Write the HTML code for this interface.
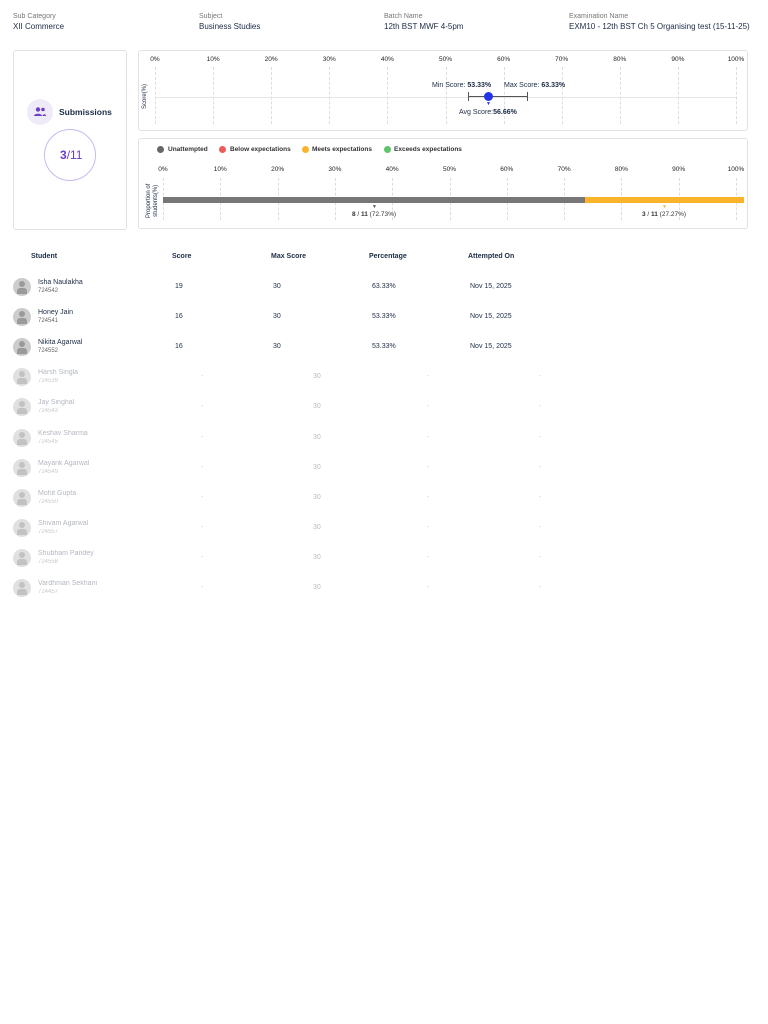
<!DOCTYPE html><html><head><style>
*{margin:0;padding:0;box-sizing:border-box}
body{width:768px;height:1024px;background:#fff;font-family:"Liberation Sans",sans-serif;position:relative;overflow:hidden;color:#1c2b45}
.a{position:absolute;white-space:nowrap}
.lbl{font-size:7px;color:#777}
.val{font-size:8px;color:#1c2b45}
.card{position:absolute;border:1px solid #e2e2e2;border-radius:3px}
.t{font-size:6.5px;color:#222;transform:translateX(-50%)}
.vl{position:absolute;border-left:1px dashed #ddd;width:0}
.h{font-size:7px;font-weight:bold;color:#1c2b45}
.c{font-size:7px;transform:translateX(-50%)}
.av{position:absolute;width:18px;height:18px;border-radius:50%;background:#ccc;overflow:hidden}
.av:before{content:"";position:absolute;left:6px;top:3px;width:6px;height:6px;border-radius:50%;background:#9a9a9a}
.av:after{content:"";position:absolute;left:4px;top:10px;width:10px;height:6px;border-radius:3px 3px 0 0;background:#9a9a9a}
</style></head><body>
<div class="a lbl" style="left:13px;top:13px">Sub Category</div><div class="a val" style="left:13px;top:22px">XII Commerce</div>
<div class="a lbl" style="left:199px;top:13px">Subject</div><div class="a val" style="left:199px;top:22px">Business Studies</div>
<div class="a lbl" style="left:384px;top:13px">Batch Name</div><div class="a val" style="left:384px;top:22px">12th BST MWF 4-5pm</div>
<div class="a lbl" style="left:569px;top:13px">Examination Name</div><div class="a val" style="left:569px;top:22px">EXM10 - 12th BST Ch 5 Organising test (15-11-25)</div>

<div class="card" style="left:13px;top:50px;width:114px;height:180px"></div>
<div class="a" style="left:27px;top:99px;width:26px;height:26px;border-radius:50%;background:#efeaf8"></div>
<svg class="a" style="left:33px;top:106px" width="14" height="12" viewBox="0 0 14 12"><circle cx="5" cy="3.5" r="2.2" fill="#6b3fc9"/><circle cx="10" cy="3.5" r="1.8" fill="#6b3fc9"/><path d="M1 10c0-3 8-3 8 0z M9.5 10c0-2 3.5-2.5 3.5 0z" fill="#6b3fc9"/></svg>
<div class="a" style="left:59px;top:107px;font-size:8.5px;font-weight:bold">Submissions</div>
<div class="a" style="left:44px;top:129px;width:52px;height:52px;border-radius:50%;border:1px solid #c9b8ef"></div>
<div class="a" style="left:60px;top:148px;font-size:12px;color:#6b3fc9"><b>3</b>/11</div>

<div class="card" style="left:138px;top:50px;width:610px;height:81px"></div>
<div class="card" style="left:138px;top:138px;width:610px;height:91px"></div>
<div id="g"></div>
<div class="a" style="left:155px;top:97px;width:581px;border-top:1px solid #e6e6e6"></div>
<div class="a" style="left:142px;font-size:6px;transform:rotate(-90deg);transform-origin:left top;top:109px">Score(%)</div>
<div class="a" style="left:468px;top:96px;width:60px;border-top:1px solid #555"></div>
<div class="a" style="left:468px;top:92px;height:9px;border-left:1px solid #555"></div>
<div class="a" style="left:527px;top:92px;height:9px;border-left:1px solid #555"></div>
<div class="a" style="left:484px;top:92px;width:9px;height:9px;border-radius:50%;background:#2233ee"></div>
<div class="a" style="left:486px;top:101px;font-size:5px;color:#2233ee">▼</div>
<div class="a" style="left:432px;top:82px;font-size:7px">Min Score: <b>53.33%</b></div>
<div class="a" style="left:504px;top:82px;font-size:7px">Max Score: <b>63.33%</b></div>
<div class="a" style="left:459px;top:109px;font-size:7px">Avg Score:<b>56.66%</b></div>

<div class="a" style="left:157px;top:146px;width:7px;height:7px;border-radius:50%;background:#666"></div><div class="a" style="left:168px;top:146px;font-size:6.5px;font-weight:bold;color:#333">Unattempted</div>
<div class="a" style="left:219px;top:146px;width:7px;height:7px;border-radius:50%;background:#ef5b5b"></div><div class="a" style="left:230px;top:146px;font-size:6.5px;font-weight:bold;color:#333">Below expectations</div>
<div class="a" style="left:302px;top:146px;width:7px;height:7px;border-radius:50%;background:#fbb32b"></div><div class="a" style="left:312px;top:146px;font-size:6.5px;font-weight:bold;color:#333">Meets expectations</div>
<div class="a" style="left:384px;top:146px;width:7px;height:7px;border-radius:50%;background:#5cc46a"></div><div class="a" style="left:394px;top:146px;font-size:6.5px;font-weight:bold;color:#333">Exceeds expectations</div>
<div class="a" style="left:146px;top:218px;font-size:6px;line-height:6.5px;transform:rotate(-90deg);transform-origin:left top;text-align:center">Proportion of<br>students(%)</div>
<div class="a" style="left:163px;top:197px;width:422px;height:6px;background:#777"></div>
<div class="a" style="left:585px;top:197px;width:159px;height:6px;background:#fbb32b"></div>
<div class="a" style="left:372px;top:204px;font-size:5px;color:#555">▼</div>
<div class="a c" style="left:374px;top:211px;color:#333;font-size:6.5px"><b>8</b> / <b>11</b> (72.73%)</div>
<div class="a" style="left:662px;top:204px;font-size:5px;color:#fbb32b">▼</div>
<div class="a c" style="left:664px;top:211px;color:#333;font-size:6.5px"><b>3</b> / <b>11</b> (27.27%)</div>

<div class="a h" style="left:31px;top:253px">Student</div>
<div class="a h" style="left:172px;top:253px">Score</div>
<div class="a h" style="left:271px;top:253px">Max Score</div>
<div class="a h" style="left:369px;top:253px">Percentage</div>
<div class="a h" style="left:468px;top:253px">Attempted On</div>
<div id="rows"></div>
<script>
var g='';
for(var i=0;i<=10;i++){var x=155+i*58.1;g+='<div class="a t" style="left:'+x+'px;top:56px">'+i*10+'%</div><div class="vl" style="left:'+x+'px;top:67px;height:57px"></div>';
var x2=163+i*57.3;g+='<div class="a t" style="left:'+x2+'px;top:166px">'+i*10+'%</div><div class="vl" style="left:'+x2+'px;top:178px;height:42px"></div>';}
document.getElementById('g').outerHTML=g;
var R=[["Isha Naulakha","724542","19","63.33%"],["Honey Jain","724541","16","53.33%"],["Nikita Agarwal","724552","16","53.33%"],["Harsh Singla","724539"],["Jay Singhal","724543"],["Keshav Sharma","724545"],["Mayank Agarwal","724549"],["Mohit Gupta","724550"],["Shivam Agarwal","724557"],["Shubham Pandey","724558"],["Vardhman Sekhani","724457"]];
var h='';
R.forEach(function(r,i){var y=288+i*30.1;var f=!r[2];var op=f?'opacity:.35;':'';
h+='<div class="av" style="left:13px;top:'+(y-10)+'px;'+(f?'opacity:.6':'')+'"></div>';
h+='<div class="a" style="left:38px;top:'+(y-9)+'px;font-size:7px;'+op+'">'+r[0]+'</div><div class="a" style="left:38px;top:'+(y)+'px;font-size:6px;color:#666;'+op+'">'+r[1]+'</div>';
if(!f){h+='<div class="a" style="left:175px;top:'+(y-5)+'px;font-size:7px">'+r[2]+'</div><div class="a" style="left:273px;top:'+(y-5)+'px;font-size:7px">30</div><div class="a" style="left:372px;top:'+(y-5)+'px;font-size:7px">'+r[3]+'</div><div class="a" style="left:470px;top:'+(y-5)+'px;font-size:7px">Nov 15, 2025</div>';}
else{h+='<div class="a" style="left:201px;top:'+(y-5)+'px;font-size:7px;color:#ccc">-</div><div class="a" style="left:313px;top:'+(y-5)+'px;font-size:7px;color:#bbb">30</div><div class="a" style="left:427px;top:'+(y-5)+'px;font-size:7px;color:#ccc">-</div><div class="a" style="left:539px;top:'+(y-5)+'px;font-size:7px;color:#ccc">-</div>';}
});
document.getElementById('rows').outerHTML=h;
</script>
</body></html>
